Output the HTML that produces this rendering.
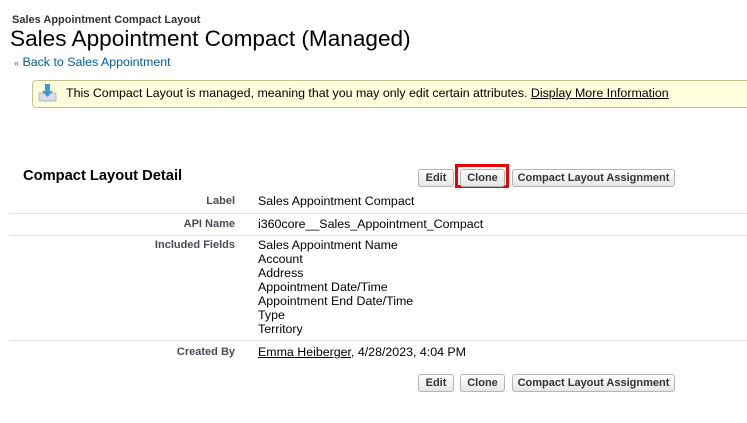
<!DOCTYPE html>
<html><head><style>
body{margin:0;width:747px;height:423px;background:#fff;font-family:"Liberation Sans",Arial,sans-serif;position:relative;overflow:hidden;color:#000}
.a{position:absolute;white-space:nowrap}
.btn{position:absolute;border:1px solid #b5b5b5;border-radius:3px;background:linear-gradient(#fff,#e6e6e6);font-size:11px;font-weight:bold;color:#333;line-height:16px;text-align:center;box-sizing:border-box;height:18px}
.lbl{position:absolute;right:512px;font-size:11px;font-weight:bold;color:#4a4a56;text-align:right}
.val{position:absolute;left:258px;font-size:12.4px;color:#000;line-height:14px}
.hr{position:absolute;left:10px;right:0;height:1px;background:#e0e3e5}
</style></head><body>
<div class="a" style="left:12px;top:14px;font-size:11px;font-weight:bold;color:#333">Sales Appointment Compact Layout</div>
<div class="a" style="left:10px;top:26px;font-size:22.6px;color:#000">Sales Appointment Compact (Managed)</div>
<div class="a" style="left:14px;top:55px;font-size:12.4px;color:#015ba7"><span style="color:#666;font-size:9px">«</span> Back to Sales Appointment</div>
<div class="a" style="left:32px;top:80px;width:730px;height:26px;background:#ffffdc;border:1px solid #c4c48a;border-radius:4px"></div>
<svg class="a" style="left:38px;top:83px" width="20" height="20" viewBox="0 0 20 20"><rect x="1" y="10" width="17" height="8" fill="#d8dde3" stroke="#b0b8c0"/><rect x="7" y="1" width="5" height="7" fill="#3b9ad9"/><path d="M4 8h11l-5.5 6z" fill="#3b9ad9"/></svg>
<div class="a" style="left:66px;top:86px;font-size:12.4px;color:#000">This Compact Layout is managed, meaning that you may only edit certain attributes. <span style="text-decoration:underline">Display More Information</span></div>
<div class="a" style="left:23px;top:168px;font-size:14.7px;font-weight:bold;color:#000">Compact Layout Detail</div>
<div class="btn" style="left:418px;top:169px;width:36px">Edit</div>
<div class="a" style="left:455px;top:164px;width:54px;height:24px;border:3px solid #e00;box-sizing:border-box"></div>
<div class="btn" style="left:460px;top:169px;width:45px">Clone</div>
<div class="btn" style="left:512px;top:169px;width:163px">Compact Layout Assignment</div>
<div class="lbl" style="top:195px">Label</div><div class="val" style="top:194px">Sales Appointment Compact</div>
<div class="hr" style="top:213px"></div>
<div class="lbl" style="top:218px">API Name</div><div class="val" style="top:217px">i360core__Sales_Appointment_Compact</div>
<div class="hr" style="top:235px"></div>
<div class="lbl" style="top:239px">Included Fields</div><div class="val" style="top:238px">Sales Appointment Name<br>Account<br>Address<br>Appointment Date/Time<br>Appointment End Date/Time<br>Type<br>Territory</div>
<div class="hr" style="top:340px"></div>
<div class="lbl" style="top:346px">Created By</div><div class="val" style="top:345px"><span style="text-decoration:underline">Emma Heiberger</span>, 4/28/2023, 4:04 PM</div>
<div class="btn" style="left:418px;top:374px;width:36px">Edit</div>
<div class="btn" style="left:460px;top:374px;width:45px">Clone</div>
<div class="btn" style="left:512px;top:374px;width:163px">Compact Layout Assignment</div>
</body></html>
